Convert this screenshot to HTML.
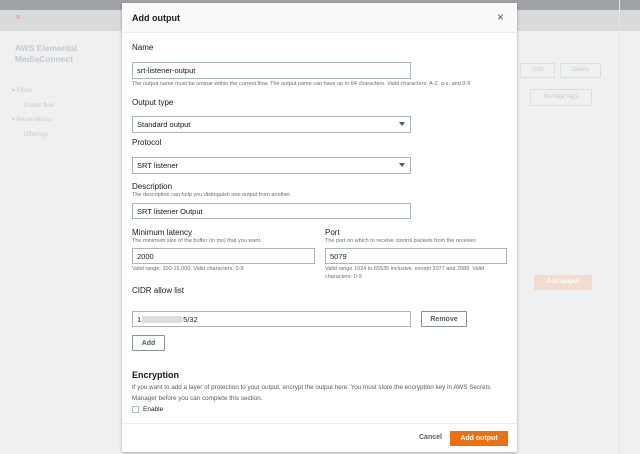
<!DOCTYPE html>
<html><head><style>
*{box-sizing:border-box;margin:0;padding:0}
body{width:640px;height:454px;overflow:hidden;background:#eff0f1;font-family:"Liberation Sans",sans-serif;position:relative;color:#16191f}
.abs{position:absolute}
.lbl{position:absolute;left:132px;font-size:8px;font-weight:normal;color:#16191f}
.hint{position:absolute;font-size:5.5px;color:#687078;line-height:8px}
.inp{position:absolute;border:1px solid #aab7b8;background:#fff;font-size:7.5px;padding-left:4px;display:flex;align-items:center;color:#16191f}
.caret{position:absolute;right:5px;top:5px;width:0;height:0;border-left:3.5px solid transparent;border-right:3.5px solid transparent;border-top:4px solid #545b64}
.btn{position:absolute;border:1px solid #879596;background:#fff;font-size:7px;font-weight:bold;color:#545b64;display:flex;align-items:center;justify-content:center;border-radius:1px}
</style></head><body>
<div class="abs" style="left:0;top:0;width:640px;height:10px;background:#a0a3a7"></div>
<div class="abs" style="left:0;top:10px;width:640px;height:21px;background:#d8dadc"></div>
<div class="abs" style="left:16px;top:15px;width:4px;height:4px;background:#e3b6c2"></div>
<div class="abs" style="left:15px;top:43px;font-size:8.5px;font-weight:bold;color:#c5c8cb;line-height:11px">AWS Elemental<br>MediaConnect</div>
<div class="abs" style="left:12px;top:84px;font-size:6px;color:#c8cbcd;line-height:14.5px">▾ Flows<br>&nbsp;&nbsp;&nbsp;&nbsp;&nbsp;&nbsp;&nbsp;Create flow<br>▾ Reservations<br>&nbsp;&nbsp;&nbsp;&nbsp;&nbsp;&nbsp;&nbsp;Offerings</div>
<div class="abs" style="left:520px;top:63px;width:35px;height:15px;border:1px solid #dcdfe0;font-size:6px;color:#c8cbcd;text-align:center;line-height:13px">Start</div>
<div class="abs" style="left:560px;top:63px;width:41px;height:15px;border:1px solid #dcdfe0;font-size:6px;color:#c8cbcd;text-align:center;line-height:13px">Delete</div>
<div class="abs" style="left:530px;top:89px;width:62px;height:17px;border:1px solid #dcdfe0;font-size:6px;color:#c8cbcd;text-align:center;line-height:15px">Manage tags</div>
<div class="abs" style="left:534px;top:275px;width:58px;height:15px;background:#f3dccd;font-size:6px;color:#fff;font-weight:bold;text-align:center;line-height:15px">Add output</div>
<div class="abs" style="left:619px;top:0;width:1px;height:454px;background:#e3e5e6"></div>

<div class="abs" style="left:122px;top:3px;width:395px;height:449px;background:#fff;box-shadow:0 1px 3px rgba(0,0,0,.3)">
<div class="abs" style="left:0;top:0;width:395px;height:30px;background:#fafafa;border-bottom:1px solid #eaeded"></div>
<div class="abs" style="left:10px;top:10px;font-size:9px;font-weight:bold">Add output</div>
<div class="abs" style="left:375px;top:7px;font-size:12px;color:#545b64">×</div>
<div class="abs" style="left:0;top:420px;width:395px;height:1px;background:#eaeded"></div>
</div>

<div class="lbl" style="top:43px">Name</div>
<div class="inp" style="left:132px;top:62px;width:279px;height:17px">srt-listener-output</div>
<div class="hint" style="left:132px;top:80px">The output name must be unique within the current flow. The output name can have up to 64 characters. Valid characters: A-Z, a-z, and 0-9</div>
<div class="lbl" style="top:98px">Output type</div>
<div class="inp" style="left:132px;top:116px;width:279px;height:17px">Standard output<div class="caret"></div></div>
<div class="lbl" style="top:138px">Protocol</div>
<div class="inp" style="left:132px;top:157px;width:279px;height:17px">SRT listener<div class="caret"></div></div>
<div class="lbl" style="top:182px">Description</div>
<div class="hint" style="left:132px;top:191px">The description can help you distinguish one output from another.</div>
<div class="inp" style="left:132px;top:203px;width:279px;height:16px">SRT listener Output</div>
<div class="lbl" style="top:228px">Minimum latency</div>
<div class="hint" style="left:132px;top:237px">The minimum size of the buffer (in ms) that you want.</div>
<div class="inp" style="left:132px;top:248px;width:183px;height:16px">2000</div>
<div class="hint" style="left:132px;top:265px">Valid range: 100-15,000. Valid characters: 0-9</div>
<div class="lbl" style="top:228px;left:325px">Port</div>
<div class="hint" style="left:325px;top:237px">The port on which to receive control packets from the receiver.</div>
<div class="inp" style="left:325px;top:248px;width:182px;height:16px">5079</div>
<div class="hint" style="left:325px;top:265px;width:185px">Valid range 1024 to 65535 inclusive, except 2077 and 2088. Valid characters: 0-9</div>
<div class="lbl" style="top:286px">CIDR allow list</div>
<div class="inp" style="left:132px;top:311px;width:279px;height:16px">1<span style="display:inline-block;width:40px;height:7px;background:#ddd;margin:0 1px"></span>5/32</div>
<div class="btn" style="left:421px;top:311px;width:46px;height:16px">Remove</div>
<div class="btn" style="left:132px;top:335px;width:33px;height:16px">Add</div>
<div class="abs" style="left:132px;top:370px;font-size:9px;font-weight:bold">Encryption</div>
<div class="abs" style="left:132px;top:382px;font-size:6.3px;color:#545b64;line-height:11px;width:385px">If you want to add a layer of protection to your output, encrypt the output here. You must store the encryption key in AWS Secrets Manager before you can complete this section.</div>
<div class="abs" style="left:132px;top:406px;width:7px;height:7px;border:1px solid #aab7b8;border-radius:1px"></div>
<div class="abs" style="left:143px;top:406px;font-size:6.5px;color:#16191f">Enable</div>
<div class="abs" style="left:419px;top:434px;font-size:7px;font-weight:bold;color:#545b64">Cancel</div>
<div class="abs" style="left:450px;top:431px;width:58px;height:15px;background:#ec7211;color:#fff;font-size:7px;font-weight:bold;text-align:center;line-height:15px">Add output</div>
</body></html>
